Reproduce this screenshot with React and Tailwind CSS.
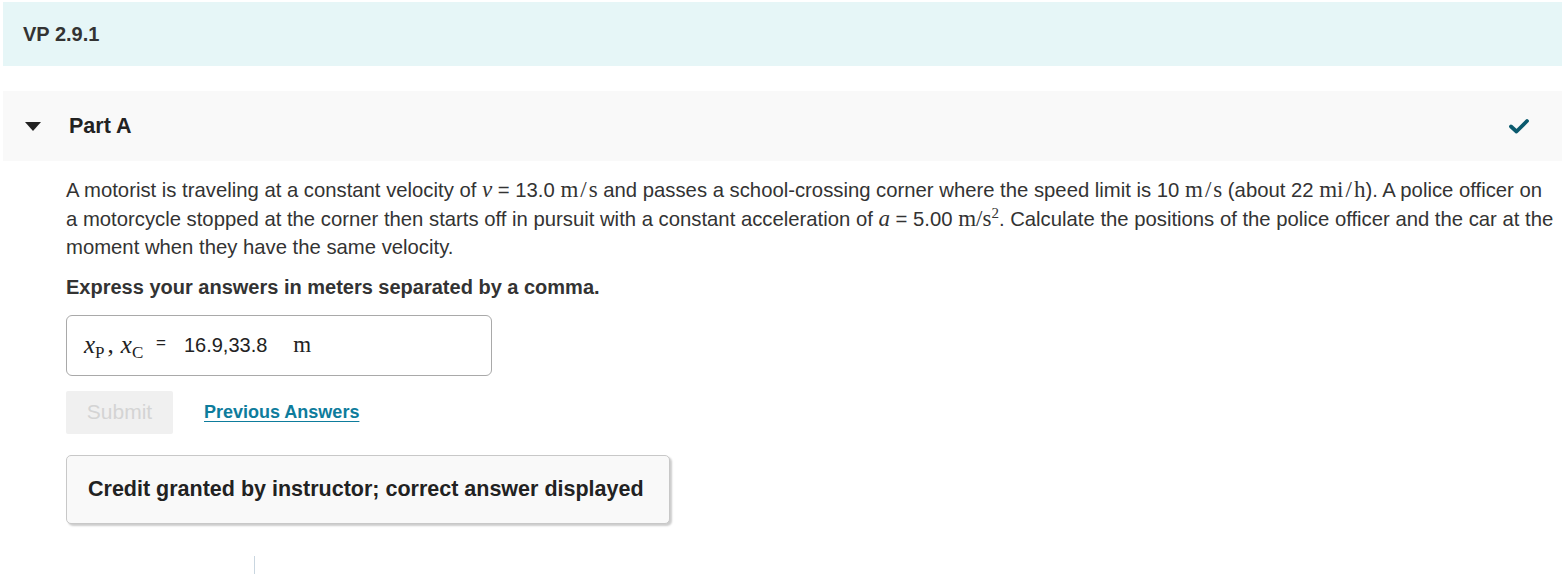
const M = ({ children }) => (
  <span className="font-['Liberation_Serif','DejaVu_Serif',serif] text-[23px] leading-none">{children}</span>
);

const V = ({ children }) => (
  <span className="font-['Liberation_Serif','DejaVu_Serif',serif] italic text-[23px] leading-none">{children}</span>
);

const App = () => {
  return (
    <div className="min-h-[574px] bg-white font-['Liberation_Sans',Arial,sans-serif] text-[#333]">
      {/* Header */}
      <div className="pt-[2px] pl-[3px] pr-[4px]">
        <div className="h-[64px] bg-[#e6f6f7] flex items-center pl-[20px]">
          <h1 className="text-[20px] font-bold text-[#333]">VP 2.9.1</h1>
        </div>
      </div>

      {/* Part A bar */}
      <div className="mt-[25px] pl-[3px] pr-[4px]">
        <div className="h-[70px] bg-[#f9f9f9] flex items-center pl-[22px] pr-[33px]">
          <svg width="16" height="10" viewBox="0 0 16 10" className="mt-[1px]">
            <path d="M0 0 L16 0 L8 9 Z" fill="#222" />
          </svg>
          <h2 className="ml-[28px] text-[21.5px] font-bold text-[#222]">Part A</h2>
          <div className="ml-auto">
            <svg width="20" height="16" viewBox="0 0 20 16">
              <path d="M2 8.5 L7.5 13.5 L18 3" fill="none" stroke="#0b5a6e" strokeWidth="3.8" strokeLinecap="round" strokeLinejoin="round" />
            </svg>
          </div>
        </div>
      </div>

      {/* Content */}
      <div className="pl-[66px] pr-[10px] pt-[15px]">
        <p className="text-[20.3px] leading-[28.5px] text-[#333]">
          A motorist is traveling at a constant velocity of <V>v</V> = 13.0 <M>m<span className="mx-[2px]">/</span>s</M> and passes a school-crossing corner where the speed limit is 10 <M>m<span className="mx-[2px]">/</span>s</M> (about 22 <M>mi<span className="mx-[2px]">/</span>h</M>). A police officer on a motorcycle stopped at the corner then starts off in pursuit with a constant acceleration of <V>a</V> = 5.00 <M>m/s<sup className="text-[15px]">2</sup></M>. Calculate the positions of the police officer and the car at the moment when they have the same velocity.
        </p>

        <p className="mt-[14px] text-[20px] leading-[23px] font-bold text-[#333]">Express your answers in meters separated by a comma.</p>

        <div className="mt-[16px] w-[426px] h-[61px] border border-[#a9a9a9] rounded-[6px] flex items-center pl-[17px]">
          <span className="inline-block w-[70px] font-['Liberation_Serif','DejaVu_Serif',serif] text-[25px] text-[#222] whitespace-nowrap">
            <i>x</i><sub className="not-italic text-[17px]">P</sub><span className="ml-[3px] mr-[7px]">,</span><i>x</i><sub className="not-italic text-[17px]">C</sub>
          </span>
          <span className="ml-[2px] text-[17px] text-[#222] -mt-[4px]">=</span>
          <span className="ml-[18px] text-[20px] text-[#222]">16.9,33.8</span>
          <span className="ml-[26px] font-['Liberation_Serif','DejaVu_Serif',serif] text-[23px] text-[#222]">m</span>
        </div>

        <div className="mt-[15px] flex items-center">
          <button className="w-[107px] h-[43px] bg-[#f0f0f0] rounded-[2px] text-[21px] text-[#d4d4d4]">Submit</button>
          <a href="#" className="ml-[31px] text-[18px] font-bold text-[#0e7c9c] underline underline-offset-[3px]">Previous Answers</a>
        </div>

        <div className="mt-[21px] w-[604px] h-[69px] bg-[#f9f9f9] border border-[#c8c8c8] rounded-[5px] shadow-[2px_2px_2px_rgba(0,0,0,0.2)] flex items-center pl-[21px]">
          <span className="text-[21.5px] font-bold text-[#222]">Credit granted by instructor; correct answer displayed</span>
        </div>

        <div className="mt-[32px] ml-[188px] w-px h-[18px] bg-[#c9d6e0]"></div>
      </div>
    </div>
  );
};

export default App;
